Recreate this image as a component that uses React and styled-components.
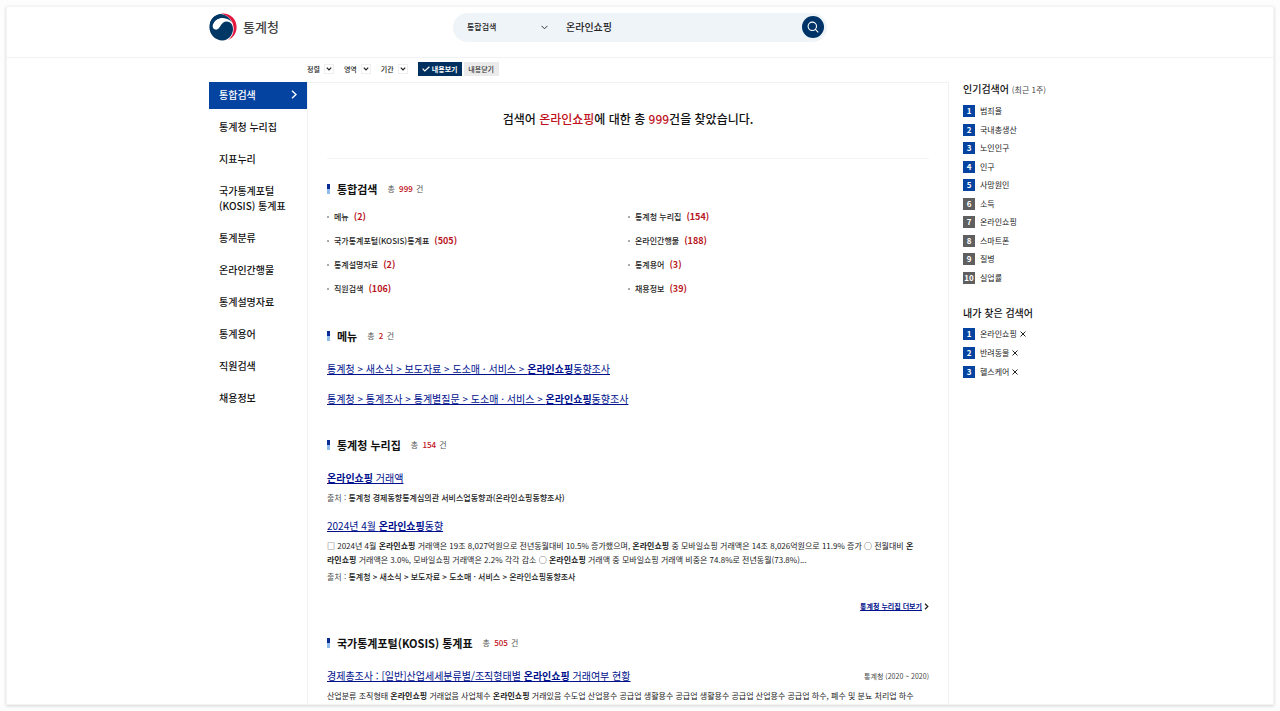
import React, { useState } from "react";
import styled, { createGlobalStyle } from "styled-components";

const Global = createGlobalStyle`
  *, *::before, *::after { box-sizing: border-box; }
  html, body { margin: 0; }
  body {
    background: #fdfdfd;
    color: #222;
    font-family: "Noto Sans CJK KR", "Noto Sans", sans-serif;
    font-size: 8px;
    line-height: 14px;
  }
  h1, h2, p, ul, ol { margin: 0; padding: 0; }
  ul, ol { list-style: none; }
  button, input, select { font: inherit; color: inherit; margin: 0; padding: 0; border: 0; background: none; }
`;

const Frame = styled.div`
  margin: 6px;
  height: calc(100vh - 12px);
  overflow: hidden;
  background: #fff;
  border: 1px solid #f3f3f3;
  box-shadow: 0 1px 3px rgba(0, 0, 0, 0.16);
`;

const Header = styled.header`
  border-bottom: 1px solid #f1f1f1;
`;

const HeaderInner = styled.div`
  display: grid;
  grid-template-columns: 1fr 374px 1fr;
  align-items: center;
  max-width: 862px;
  height: 50px;
  margin: 0 auto;
  padding-bottom: 10px;
`;

const Logo = styled.a`
  display: flex;
  align-items: center;
  gap: 6px;
  color: #444;
  text-decoration: none;
  font-size: 13px;
  font-weight: 500;
  line-height: 20px;
`;

const SearchForm = styled.form`
  display: flex;
  align-items: center;
  height: 29px;
  padding: 0 3px 0 14px;
  border-radius: 15px;
  background: #eff4f8;
  font-weight: 500;
`;

const ScopeWrap = styled.div`
  position: relative;
  display: flex;
  align-items: center;
  width: 82px;
  margin-right: 17px;
`;

const ScopeSelect = styled.select`
  width: 100%;
  appearance: none;
  outline: none;
`;

const ScopeArrow = styled.svg`
  position: absolute;
  right: 1px;
  pointer-events: none;
`;

const SearchInput = styled.input`
  flex: 1;
  min-width: 0;
  font-size: 10px;
  outline: none;
`;

const SearchButton = styled.button`
  display: grid;
  place-items: center;
  width: 22px;
  height: 22px;
  border-radius: 50%;
  background: #003468;
`;

const Columns = styled.div`
  display: grid;
  grid-template-columns: 98px minmax(0, 1fr) 108px;
  max-width: 862px;
  margin: 0 auto;
`;

const Toolbar = styled.div`
  grid-column: 1 / -1;
  display: flex;
  align-items: center;
  gap: 10px;
  height: 24px;
  padding: 0 0 2px 98px;
  font-size: 7px;
  font-weight: 500;
`;

const Filter = styled.button`
  display: flex;
  align-items: center;
  gap: 4px;
`;

const FilterArrow = styled.span`
  display: grid;
  place-items: center;
  width: 10px;
  height: 10px;
  border: 1px solid #efefef;
`;

const Toggle = styled.div`
  display: flex;
  gap: 2px;
`;

const ToggleButton = styled.button`
  display: flex;
  align-items: center;
  justify-content: center;
  gap: 2px;
  width: ${(p) => (p.$on ? 44 : 35)}px;
  height: 14px;
  background: ${(p) => (p.$on ? "#003060" : "#ebebeb")};
  color: ${(p) => (p.$on ? "#fff" : "#333")};
  font-weight: ${(p) => (p.$on ? 700 : 500)};
`;

const SideNav = styled.nav`
  display: flex;
  flex-direction: column;
  gap: 5px;
`;

const SideLink = styled.a`
  display: flex;
  align-items: center;
  justify-content: space-between;
  padding: 5px 10px 7px;
  background: ${(p) => (p.$active ? "#0543a0" : "transparent")};
  color: ${(p) => (p.$active ? "#fff" : "#111")};
  font-size: 10px;
  font-weight: 500;
  line-height: 15px;
  text-decoration: none;
`;

const Main = styled.main`
  margin-right: 14px;
  padding: 0 19px 20px;
  border: 1px solid #f1f1f1;
  border-bottom: 0;
`;

const Summary = styled.h1`
  padding: 26px 0 29px;
  border-bottom: 1px solid #f5f5f5;
  color: #111;
  font-size: 12px;
  font-weight: 500;
  line-height: 20px;
  text-align: center;
`;

const Red = styled.em`
  color: #c1121c;
  font-style: normal;
  font-weight: 500;
`;

const Section = styled.section`
  padding-top: 20px;
`;

const SectionHead = styled.div`
  display: flex;
  align-items: center;
  color: #555;
  line-height: 20px;

  h2 {
    color: #111;
    font-size: 11px;
    font-weight: 700;
  }
`;

const Bar = styled.span`
  width: 3px;
  height: 10px;
  margin-right: 7px;
  background: linear-gradient(#0a2a96 50%, #8fbce8 50%);
`;

const Count = styled.span`
  margin-left: 10px;
  color: #555;

  em { margin: 0 1px 0 2px; }
`;

const CountGrid = styled.ul`
  display: grid;
  grid-template-columns: 1fr 1fr;
  padding: 6px 0 5px;

  li {
    display: flex;
    align-items: center;
    gap: 5px;
    line-height: 24px;
    font-weight: 500;
  }
  li::before {
    content: "";
    width: 2px;
    height: 2px;
    background: #aaa;
  }
`;

const CountNumber = styled.strong`
  color: #b8141c;
  font-size: 9px;
  font-weight: 700;
`;

const Results = styled.ul`
  display: flex;
  flex-direction: column;
  gap: ${(p) => p.$gap}px;
  padding: 13px 0 6px;
`;

const ResultHead = styled.div`
  display: flex;
  align-items: center;
  justify-content: space-between;
`;

const ResultLink = styled.a`
  color: #00108c;
  font-size: 10px;
  line-height: 20px;
`;

const Meta = styled.span`
  color: #444;
  font-size: 7px;
`;

const Body = styled.p`
  margin-top: 3px;
  padding-right: 10px;
  color: #222;
  word-break: break-all;
`;

const Source = styled.p`
  margin-top: 3px;
  color: #555;

  span { color: #222; font-weight: 500; }
`;

const More = styled.div`
  display: flex;
  align-items: center;
  justify-content: flex-end;
  gap: 2px;
  padding-top: 9px;

  a { color: #00108c; font-size: 7px; font-weight: 700; }
`;

const Aside = styled.aside`
  display: flex;
  flex-direction: column;
  gap: 19px;
`;

const AsideTitle = styled.h2`
  margin-bottom: 5px;
  color: #111;
  font-size: 10px;
  font-weight: 500;
  line-height: 14px;

  small { color: #444; font-size: 8px; font-weight: 400; }
`;

const RankList = styled.ol`
  display: grid;
  grid-auto-rows: 1fr;
  height: ${(p) => p.$height}px;

  li { display: flex; align-items: center; gap: 5px; }
  a { color: #222; text-decoration: none; }
`;

const Rank = styled.span`
  display: grid;
  place-items: center;
  width: 12px;
  height: 12px;
  background: ${(p) => (p.$top ? "#0543a0" : "#5f5f5f")};
  color: #fff;
  font-weight: 700;
  line-height: 12px;
`;

const RemoveButton = styled.button`
  display: grid;
  place-items: center;
  width: 6px;
  height: 6px;
  margin-left: -2px;
`;

const Stroke = ({ w, h, d, color = "#222", width = 1.2 }) => (
  <svg width={w} height={h} viewBox={`0 0 ${w} ${h}`} fill="none" stroke={color} strokeWidth={width} aria-hidden="true">
    <path d={d} />
  </svg>
);

const Emblem = () => (
  <svg width="28" height="28" viewBox="0 0 28 28" aria-hidden="true">
    <path d="M12 .6C20-.6 27.600 5 27.600 14c0 6-3.400 10.800-8.600 13C22.800 24 25 20 24.600 14.500 24.200 8 19.500 2.500 12 .6Z" fill="#e4173e" />
    <path d="M12 .9C5 1.700.4 7.500.4 14c0 7.500 5.800 13.400 13 13.400 6 0 10.600-5.400 10.600-11.400 0-4.500-2.600-7.400-6.300-7.400-3 0-4.700 1.800-6 4-1.400 2.500-2.900 4.400-5.300 4-2.800-.5-3.300-3.800-2-6.300C6.300 6.500 10 4.600 14 4.900c3.600.2 6.600 1.800 8.800 4.300C21 5 17 1.600 12 .9Z" fill="#003764" />
    <path d="M4 11C5.500 7 9.500 4.700 14 4.900L12 .9C5 1.700 1.500 6 1 11Z" fill="#003764" />
  </svg>
);

const menus = ["통합검색", "통계청 누리집", "지표누리", "국가통계포털 (KOSIS) 통계표", "통계분류", "온라인간행물", "통계설명자료", "통계용어", "직원검색", "채용정보"];
const counts = [
  ["메뉴", 2], ["통계청 누리집", 154],
  ["국가통계포털(KOSIS)통계표", 505], ["온라인간행물", 188],
  ["통계설명자료", 2], ["통계용어", 3],
  ["직원검색", 106], ["채용정보", 39],
];
const popular = ["범죄율", "국내총생산", "노인인구", "인구", "사망원인", "소득", "온라인쇼핑", "스마트폰", "질병", "실업률"];
const recent = ["온라인쇼핑", "반려동물", "헬스케어"];

const Heading = ({ title, total }) => (
  <SectionHead>
    <Bar />
    <h2>{title}</h2>
    <Count>총 <Red>{total}</Red> 건</Count>
  </SectionHead>
);

const Term = () => <b>온라인쇼핑</b>;

export default function App() {
  const [query, setQuery] = useState("온라인쇼핑");
  return (
    <>
      <Global />
      <Frame lang="ko">
        <Header>
          <HeaderInner>
            <Logo href="#home"><Emblem />통계청</Logo>
            <SearchForm role="search" onSubmit={(e) => e.preventDefault()}>
              <ScopeWrap>
                <ScopeSelect aria-label="검색 영역"><option>통합검색</option></ScopeSelect>
                <ScopeArrow width="7" height="5" viewBox="0 0 7 5" fill="none" stroke="#333"><path d="M.5.8l3 3 3-3" /></ScopeArrow>
              </ScopeWrap>
              <SearchInput aria-label="검색어" value={query} onChange={(e) => setQuery(e.target.value)} />
              <SearchButton aria-label="검색">
                <svg width="12" height="12" viewBox="0 0 12 12" fill="none" stroke="#fff" strokeWidth="1.1" aria-hidden="true">
                  <circle cx="5.300" cy="5.300" r="4.200" /><path d="M8.300 8.300l3 3" />
                </svg>
              </SearchButton>
            </SearchForm>
          </HeaderInner>
        </Header>
        <Columns>
          <Toolbar>
            {["정렬", "영역", "기간"].map((f) => (
              <Filter key={f}>{f}<FilterArrow><Stroke w={6} h={4} d="M.8.6L3 2.800 5.200.6" /></FilterArrow></Filter>
            ))}
            <Toggle>
              <ToggleButton $on><Stroke w={8} h={6} d="M.6 2.700l2.200 2.300L7.400.7" color="#fff" />내용보기</ToggleButton>
              <ToggleButton>내용닫기</ToggleButton>
            </Toggle>
          </Toolbar>
          <SideNav>
            {menus.map((m, i) => (
              <SideLink key={m} href="#menu" $active={i === 0}>
                {m}{i === 0 && <Stroke w={6} h={9} d="M1 .8l4 3.700-4 3.700" color="#fff" width={1.4} />}
              </SideLink>
            ))}
          </SideNav>
          <Main>
            <Summary>검색어 <Red>온라인쇼핑</Red>에 대한 총 <Red>999</Red>건을 찾았습니다.</Summary>
            <Section>
              <Heading title="통합검색" total={999} />
              <CountGrid>
                {counts.map(([name, n]) => <li key={name}>{name}<CountNumber>({n})</CountNumber></li>)}
              </CountGrid>
            </Section>
            <Section>
              <Heading title="메뉴" total={2} />
              <Results $gap={10}>
                <li><ResultLink href="#r">통계청 &gt; 새소식 &gt; 보도자료 &gt; 도소매 · 서비스 &gt; <Term />동향조사</ResultLink></li>
                <li><ResultLink href="#r">통계청 &gt; 통계조사 &gt; 통계별질문 &gt; 도소매 · 서비스 &gt; <Term />동향조사</ResultLink></li>
              </Results>
            </Section>
            <Section>
              <Heading title="통계청 누리집" total={154} />
              <Results $gap={11}>
                <li>
                  <ResultHead><ResultLink href="#r"><Term /> 거래액</ResultLink></ResultHead>
                  <Source>출처 : <span>통계청 경제동향통계심의관 서비스업동향과(온라인쇼핑동향조사)</span></Source>
                </li>
                <li>
                  <ResultHead><ResultLink href="#r">2024년 4월 <Term />동향</ResultLink></ResultHead>
                  <Body>
                    □ 2024년 4월 <Term /> 거래액은 19조 8,027억원으로 전년동월대비 10.5% 증가했으며, <Term /> 중 모바일쇼핑 거래액은 14조 8,026억원으로 11.9% 증가 ○ 전월대비 <Term /> 거래액은 3.0%, 모바일쇼핑 거래액은 2.2% 각각 감소 ○ <Term /> 거래액 중 모바일쇼핑 거래액 비중은 74.8%로 전년동월(73.8%)...
                  </Body>
                  <Source>출처 : <span>통계청 &gt; 새소식 &gt; 보도자료 &gt; 도소매 · 서비스 &gt; 온라인쇼핑동향조사</span></Source>
                </li>
              </Results>
              <More><a href="#more">통계청 누리집 더보기</a><Stroke w={5} h={7} d="M1 .8l2.800 2.700L1 6.200" /></More>
            </Section>
            <Section>
              <Heading title="국가통계포털(KOSIS) 통계표" total={505} />
              <Results $gap={11}>
                <li>
                  <ResultHead>
                    <ResultLink href="#r">경제총조사 : [일반]산업세세분류별/조직형태별 <Term /> 거래여부 현황</ResultLink>
                    <Meta>통계청 (2020 ~ 2020)</Meta>
                  </ResultHead>
                  <Body>산업분류 조직형태 <Term /> 거래없음 사업체수 <Term /> 거래있음 수도업 산업용수 공급업 생활용수 공급업 생활용수 공급업 산업용수 공급업 하수, 폐수 및 분뇨 처리업 하수</Body>
                </li>
              </Results>
            </Section>
          </Main>
          <Aside>
            <section>
              <AsideTitle>인기검색어 <small>(최근 1주)</small></AsideTitle>
              <RankList $height={185}>
                {popular.map((t, i) => <li key={t}><Rank $top={i < 5}>{i + 1}</Rank><a href="#s">{t}</a></li>)}
              </RankList>
            </section>
            <section>
              <AsideTitle>내가 찾은 검색어</AsideTitle>
              <RankList $height={56}>
                {recent.map((t, i) => (
                  <li key={t}><Rank $top>{i + 1}</Rank><a href="#s">{t}</a>
                    <RemoveButton aria-label={`${t} 삭제`}><Stroke w={6} h={6} d="M.5.5l5 5M5.500.5l-5 5" width={1} /></RemoveButton></li>
                ))}
              </RankList>
            </section>
          </Aside>
        </Columns>
      </Frame>
    </>
  );
}
